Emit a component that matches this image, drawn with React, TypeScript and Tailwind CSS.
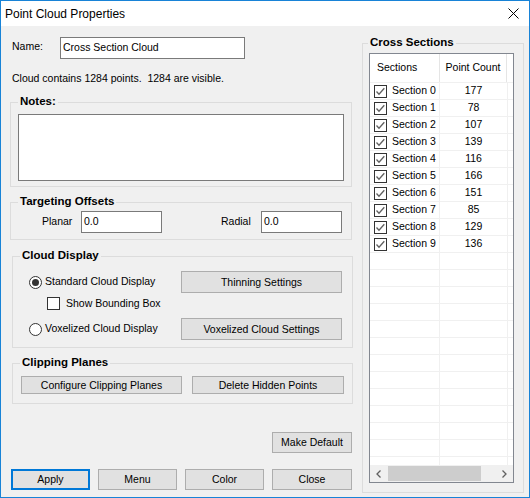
import React from 'react';

const counts = [177, 78, 107, 139, 116, 166, 151, 85, 129, 136];

function Group({ title, className, labelClass = 'ml-[7px]', children }: { title: string; className: string; labelClass?: string; children?: React.ReactNode }) {
  return (
    <div className={`border border-[#dcdcdc] ${className}`}>
      <div className={`-mt-[8px] h-[13px] w-fit bg-[#f0f0f0] px-[2px] text-[11.5px] font-bold leading-[13px] ${labelClass}`}>{title}</div>
      {children}
    </div>
  );
}

function Btn({ label, className }: { label: string; className: string }) {
  return (
    <button className={`flex items-center justify-center border border-[#adadad] bg-[#e1e1e1] leading-none ${className}`}>
      {label}
    </button>
  );
}

function Radio({ checked }: { checked?: boolean }) {
  return (
    <svg width="13" height="13" viewBox="0 0 13 13" className="shrink-0">
      <circle cx="6.5" cy="6.5" r="6" fill="#fff" stroke="#333" strokeWidth="1" />
      {checked && <circle cx="6.5" cy="6.5" r="3.5" fill="#333" />}
    </svg>
  );
}

function Check({ checked }: { checked?: boolean }) {
  return (
    <svg width="13" height="13" viewBox="0 0 13 13" className="shrink-0">
      <rect x="0.5" y="0.5" width="12" height="12" fill="#fff" stroke="#333" strokeWidth="1" />
      {checked && <path d="M2.5 6.5 L5 9.2 L10.3 3.2" fill="none" stroke="#606060" strokeWidth="1.3" />}
    </svg>
  );
}

export default function App() {
  const rows = Array.from({ length: 24 }, (_, i) => (i < counts.length ? counts[i] : null));

  return (
    <div className="flex h-[498px] w-[530px] flex-col overflow-hidden border border-[#1883d7] bg-[#f0f0f0] font-['Liberation_Sans',Arial,sans-serif] text-[10.5px] text-black">
      {/* Title bar */}
      <div className="flex h-[25px] shrink-0 items-center justify-between bg-white pl-[4px] pr-[10px]">
        <span className="text-[12px]">Point Cloud Properties</span>
        <svg width="11" height="11" viewBox="0 0 11 11">
          <path d="M0.5 0.5 L10.5 10.5 M10.5 0.5 L0.5 10.5" stroke="#000" strokeWidth="1" />
        </svg>
      </div>

      <div className="flex flex-1">
        {/* Left column */}
        <div className="flex w-[355px] flex-col">
          <div className="mt-[11px] ml-[11px] flex h-[22px] items-center">
            <span className="w-[48px] -mt-[3px]">Name:</span>
            <div className="flex h-[22px] w-[185px] items-center border border-[#7a7a7a] bg-white px-[2px]">Cross Section Cloud</div>
          </div>
          <div className="mt-[13px] ml-[11px] h-[13px] leading-[13px]">Cloud contains 1284 points.&nbsp; 1284 are visible.</div>

          <Group title="Notes:" className="mt-[17px] ml-[9px] h-[85px] w-[342px]">
            <div className="mt-[6px] ml-[7px] h-[67px] w-[326px] border border-[#7a7a7a] bg-white" />
          </Group>

          <Group title="Targeting Offsets" className="mt-[15px] ml-[9px] h-[38px] w-[342px]">
            <div className="mt-[3px] flex items-center">
              <span className="ml-[31px] w-[39px]">Planar</span>
              <div className="flex h-[22px] w-[81px] items-center border border-[#7a7a7a] bg-white px-[2px]">0.0</div>
              <span className="ml-[59px] w-[40px]">Radial</span>
              <div className="flex h-[22px] w-[81px] items-center border border-[#7a7a7a] bg-white px-[2px]">0.0</div>
            </div>
          </Group>

          <Group title="Cloud Display" className="mt-[16px] ml-[11px] h-[92px] w-[341px]">
            <div className="mt-[9px] flex items-center">
              <div className="ml-[16px] flex w-[152px] items-center gap-[3px]">
                <Radio checked />
                <span>Standard Cloud Display</span>
              </div>
              <Btn label="Thinning Settings" className="h-[22px] w-[161px]" />
            </div>
            <div className="mt-[4px] ml-[34px] flex h-[13px] items-center gap-[6px]">
              <Check />
              <span>Show Bounding Box</span>
            </div>
            <div className="mt-[8px] flex items-center">
              <div className="ml-[16px] flex w-[152px] items-center gap-[3px]">
                <Radio />
                <span>Voxelized Cloud Display</span>
              </div>
              <Btn label="Voxelized Cloud Settings" className="h-[22px] w-[161px]" />
            </div>
          </Group>

          <Group title="Clipping Planes" className="mt-[15px] ml-[11px] h-[41px] w-[341px]">
            <div className="mt-[7px] ml-[8px] flex gap-[10px]">
              <Btn label="Configure Clipping Planes" className="h-[18px] w-[161px]" />
              <Btn label="Delete Hidden Points" className="h-[18px] w-[152px]" />
            </div>
          </Group>

          <Btn label="Make Default" className="mt-[28px] ml-[271px] h-[21px] w-[80px]" />

          <div className="mt-[16px] ml-[10px] flex gap-[8px]">
            <button className="flex h-[21px] w-[79px] items-center justify-center border-2 border-[#0078d7] bg-[#e1e1e1] leading-none">Apply</button>
            <Btn label="Menu" className="h-[21px] w-[79px]" />
            <Btn label="Color" className="h-[21px] w-[79px]" />
            <Btn label="Close" className="h-[21px] w-[80px]" />
          </div>
        </div>

        {/* Right column */}
        <div className="flex flex-col">
          <Group title="Cross Sections" labelClass="ml-[5px]" className="mt-[17px] ml-[6px] flex h-[450px] w-[162px] flex-col">
            <div className="mt-[4px] ml-[6px] flex h-[430px] w-[145px] flex-col border border-[#828790] bg-white">
              <div className="flex h-[28px] shrink-0">
                <div className="flex w-[70px] items-center border-r border-[#e5e5e5] pl-[7px]">Sections</div>
                <div className="flex w-[67px] items-center justify-center border-r border-[#e5e5e5]">Point Count</div>
              </div>
              <div className="flex-1 overflow-hidden">
                {rows.map((c, i) => (
                  <div key={i} className="flex h-[17px] border-t border-[#f0f0f0]">
                    <div className="flex w-[70px] items-center gap-[5px] border-r border-[#f0f0f0] pl-[4px]">
                      {c !== null && (
                        <>
                          <Check checked />
                          <span>Section {i}</span>
                        </>
                      )}
                    </div>
                    <div className="flex w-[68px] items-center justify-center border-r border-[#f0f0f0]">{c}</div>
                  </div>
                ))}
              </div>
              <div className="flex h-[17px] shrink-0 items-center bg-[#f0f0f0]">
                <div className="flex w-[17px] items-center justify-center">
                  <svg width="5" height="8" viewBox="0 0 5 8">
                    <path d="M4.5 0.5 L1 4 L4.5 7.5" fill="none" stroke="#606060" strokeWidth="1.3" />
                  </svg>
                </div>
                <div className="ml-[1px] h-[15px] w-[93px] bg-[#cdcdcd]" />
                <div className="flex-1" />
                <div className="flex w-[17px] items-center justify-center">
                  <svg width="5" height="8" viewBox="0 0 5 8">
                    <path d="M0.5 0.5 L4 4 L0.5 7.5" fill="none" stroke="#606060" strokeWidth="1.3" />
                  </svg>
                </div>
              </div>
            </div>
          </Group>
        </div>
      </div>
    </div>
  );
}
